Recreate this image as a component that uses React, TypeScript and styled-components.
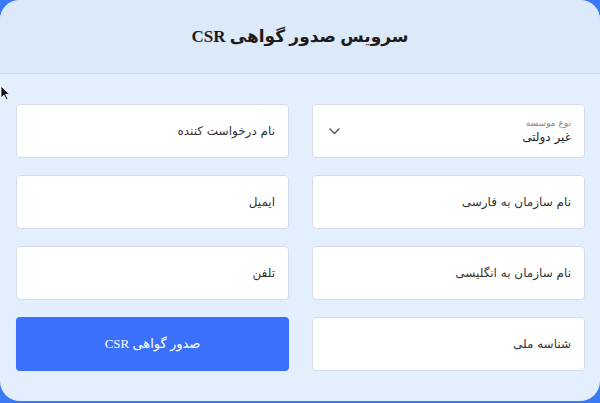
import styled, { createGlobalStyle } from 'styled-components';

const GlobalStyle = createGlobalStyle`
    html, body {
        margin: 0;
        padding: 0;
        background: #3b7af5;
    }
    * {
        box-sizing: border-box;
    }
`;

const fields = [
    { label: 'نام سازمان به فارسی' },
    { label: 'ایمیل' },
    { label: 'نام سازمان به انگلیسی' },
    { label: 'تلفن' },
    { label: 'شناسه ملی' },
];

const ChevronIcon = () => (
    <svg width="11" height="7" viewBox="0 0 11 7" fill="none">
        <path d="M1 1l4.5 4.5L10 1" stroke="#555" strokeWidth="1.4" strokeLinecap="round" strokeLinejoin="round" />
    </svg>
);

const CursorIcon = () => (
    <svg width="10" height="16" viewBox="0 0 10 16">
        <path d="M1 1v12l3-3 2.5 5 1.6-0.8L5.6 9.3H9.5z" fill="#111" stroke="#fff" strokeWidth="0.8" />
    </svg>
);

export default function App() {
    return (
        <>
            <GlobalStyle />
            <Card dir="rtl">
                <Header>
                    <Title>سرویس صدور گواهی CSR</Title>
                </Header>
                <Body>
                    <Grid>
                        <SelectBox>
                            <SelectText>
                                <SmallLabel>نوع موسسه</SmallLabel>
                                <SelectValue>غیر دولتی</SelectValue>
                            </SelectText>
                            <ChevronIcon />
                        </SelectBox>
                        <Field>
                            <FieldLabel>نام درخواست کننده</FieldLabel>
                        </Field>
                        {fields.map((f) => (
                            <Field key={f.label}>
                                <FieldLabel>{f.label}</FieldLabel>
                            </Field>
                        ))}
                        <SubmitButton>صدور گواهی CSR</SubmitButton>
                    </Grid>
                </Body>
                <Cursor>
                    <CursorIcon />
                </Cursor>
            </Card>
        </>
    );
}

const Card = styled.div`
    position: relative;
    width: 600px;
    height: 401px;
    border-radius: 20px;
    overflow: hidden;
    background: #e3effc;
    display: flex;
    flex-direction: column;
    font-family: 'DejaVu Sans', sans-serif;
`;

const Header = styled.header`
    height: 74px;
    background: #dce9f8;
    border-bottom: 1px solid #cad8e8;
    display: flex;
    align-items: center;
    justify-content: center;
`;

const Title = styled.h1`
    margin: 0;
    font-family: 'Liberation Serif', 'DejaVu Sans', serif;
    font-size: 17px;
    font-weight: 700;
    color: #1c1c1c;
`;

const Body = styled.main`
    padding: 30px 15px 0 16px;
`;

const Grid = styled.div`
    display: grid;
    grid-template-columns: 273px 273px;
    column-gap: 23px;
    row-gap: 17px;
    grid-auto-rows: 54px;
`;

const Field = styled.div`
    background: #fff;
    border: 1px solid #d3dce6;
    border-radius: 4px;
    display: flex;
    align-items: center;
    padding: 0 13px;
`;

const FieldLabel = styled.span`
    font-size: 12px;
    color: #333;
`;

const SelectBox = styled(Field)`
    justify-content: space-between;
    padding: 0 13px 0 16px;
`;

const SelectText = styled.div`
    display: flex;
    flex-direction: column;
    gap: 2px;
`;

const SmallLabel = styled.span`
    font-size: 9px;
    color: #888;
`;

const SelectValue = styled.span`
    font-size: 12px;
    color: #222;
`;

const SubmitButton = styled.button`
    border: none;
    border-radius: 4px;
    background: #3a70fb;
    color: #fff;
    font-family: 'Liberation Serif', 'DejaVu Sans', serif;
    font-size: 13px;
    cursor: pointer;
`;

const Cursor = styled.div`
    position: absolute;
    left: 0;
    top: 85px;
`;
